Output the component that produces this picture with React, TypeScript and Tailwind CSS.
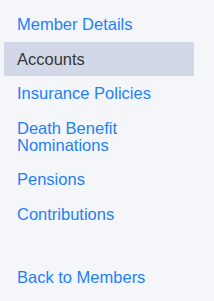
import React from "react";

const items = [
  "Member Details",
  "Accounts",
  "Insurance Policies",
  "Death Benefit Nominations",
  "Pensions",
  "Contributions",
];

export default function App() {
  return (
    <div
      className="w-[214px] h-[301px] bg-[#f4f6fa] pt-[7.25px] px-[4px]"
      style={{ fontFamily: '"Liberation Sans", Arial, sans-serif' }}
    >
      <ul className="w-[190px] flex flex-col">
        {items.map((label) => {
          const active = label === "Accounts";
          return (
            <li
              key={label}
              className={
                active
                  ? "pl-[13px] pr-[13px] py-[8.75px] text-[16.5px] leading-[17px] bg-[#d3d8e8] text-[#363636]"
                  : "pl-[13px] pr-[13px] py-[8.75px] text-[16.5px] leading-[17px] text-[#1f80f8]"
              }
            >
              {label}
            </li>
          );
        })}
        <li className="mt-[28.5px] pl-[13px] pr-[13px] py-[8.75px] text-[16.5px] leading-[17px] text-[#1f80f8]">
          Back to Members
        </li>
      </ul>
    </div>
  );
}
